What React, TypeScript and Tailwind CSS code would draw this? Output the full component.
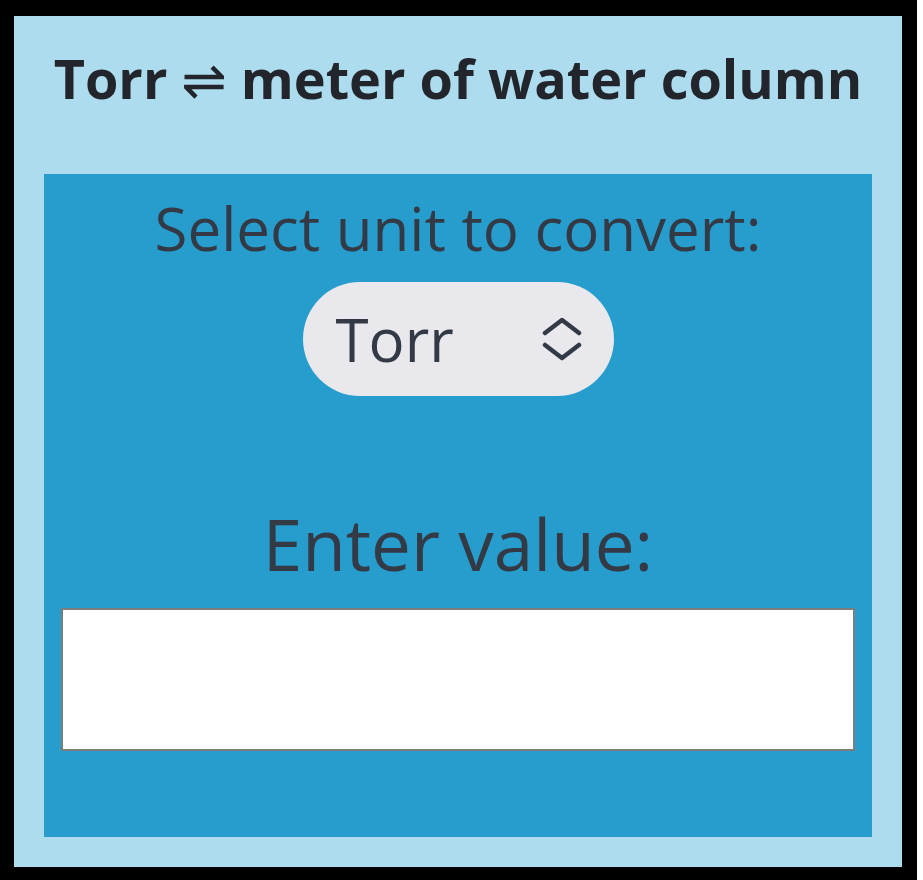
const UpDownIcon = () => (
  <svg width="40" height="46" viewBox="0 0 40 46" fill="none" stroke="#333a45" strokeWidth="4.5" strokeLinecap="round" strokeLinejoin="round">
    <path d="M3 17 L20 4 L37 17" />
    <path d="M3 29 L20 42 L37 29" />
  </svg>
);

const App = () => {
  return (
    <div className="w-[923px] h-[880px] bg-white">
      <div className="w-[917px] h-[880px] bg-black border-black border-l-[14px] border-t-[16px] border-r-[15px] border-b-[13px] font-['Open_Sans',sans-serif]">
        <div className="h-full bg-[#addcef] px-[30px] pb-[30px] flex flex-col">
          <h1 className="mt-[35px] text-[54px] leading-[55px] font-bold text-[#22252b] text-center whitespace-nowrap">
            Torr{" "}
            <span className="font-normal font-['DejaVu_Sans',sans-serif]">⇌</span>{" "}
            meter of water column
          </h1>
          <div className="mt-[66px] flex-1 bg-[#269dcd] flex flex-col items-center px-[17px]">
            <label className="mt-[24px] text-[60px] leading-[60px] text-[#333a45]">
              Select unit to convert:
            </label>
            <div className="mt-[24px] w-[311px] h-[114px] rounded-full bg-[#e9e9ed] flex items-center justify-between pl-[33px] pr-[32px]">
              <span className="text-[60px] leading-[60px] text-[#333a45]">Torr</span>
              <UpDownIcon />
            </div>
            <label className="mt-[112px] text-[71px] leading-[71px] text-[#333a45]">Enter value:</label>
            <input
              className="mt-[29px] w-full h-[143px] bg-white border-2 border-[#7d7d7d] outline-none"
              type="text"
            />
          </div>
        </div>
      </div>
    </div>
  );
};

export default App;
